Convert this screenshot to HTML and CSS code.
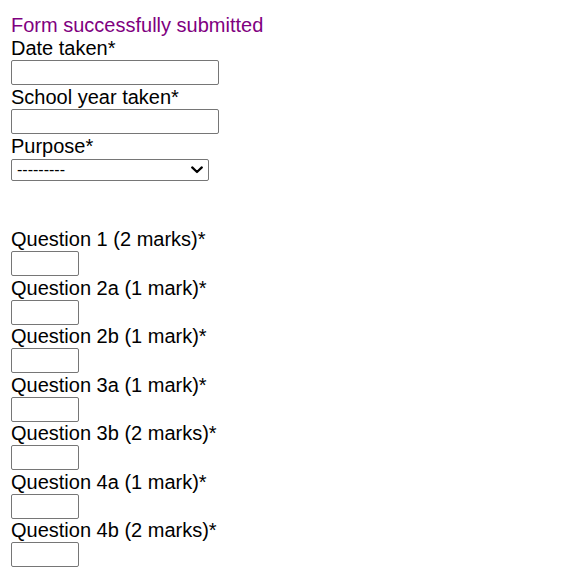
FILE: index.html
```html
<!DOCTYPE html>
<html lang="en">
<head>
<meta charset="utf-8">
<title>Form</title>
<link rel="stylesheet" href="styles.css">
</head>
<body>
<form class="form">
  <div class="message">Form successfully submitted</div>
  <div class="field">
    <label class="label" for="date">Date taken*</label>
    <input class="input input-wide" id="date" type="text">
  </div>
  <div class="field">
    <label class="label" for="year">School year taken*</label>
    <input class="input input-wide" id="year" type="text">
  </div>
  <div class="field">
    <label class="label" for="purpose">Purpose*</label>
    <div class="select-wrap">
      <select class="select" id="purpose">
        <option>---------</option>
      </select>
      <svg class="chevron" width="12" height="8" viewBox="0 0 12 8" aria-hidden="true">
        <path d="M1.2 1.4 L6 6 L10.8 1.4" fill="none" stroke="#000" stroke-width="2.2" stroke-linecap="round" stroke-linejoin="round"/>
      </svg>
    </div>
  </div>
  <div class="questions">
    <div class="qfield">
      <label class="label" for="q1">Question 1 (2 marks)*</label>
      <input class="input input-small" id="q1" type="text">
    </div>
    <div class="qfield">
      <label class="label" for="q2a">Question 2a (1 mark)*</label>
      <input class="input input-small" id="q2a" type="text">
    </div>
    <div class="qfield">
      <label class="label" for="q2b">Question 2b (1 mark)*</label>
      <input class="input input-small" id="q2b" type="text">
    </div>
    <div class="qfield">
      <label class="label" for="q3a">Question 3a (1 mark)*</label>
      <input class="input input-small" id="q3a" type="text">
    </div>
    <div class="qfield">
      <label class="label" for="q3b">Question 3b (2 marks)*</label>
      <input class="input input-small" id="q3b" type="text">
    </div>
    <div class="qfield">
      <label class="label" for="q4a">Question 4a (1 mark)*</label>
      <input class="input input-small" id="q4a" type="text">
    </div>
    <div class="qfield">
      <label class="label" for="q4b">Question 4b (2 marks)*</label>
      <input class="input input-small" id="q4b" type="text">
    </div>
  </div>
</form>
</body>
</html>
```

FILE: styles.css
```css
html, body {
  margin: 0;
  padding: 0;
  background: #ffffff;
}

body {
  padding: 14px 11px 0 11px;
  font-family: "Liberation Sans", Arial, sans-serif;
  font-size: 20px;
  color: #000000;
  overflow: hidden;
}

.form {
  display: flex;
  flex-direction: column;
}

.message {
  color: #800080;
  line-height: 22px;
  padding-bottom: 2px;
}

.field {
  display: flex;
  flex-direction: column;
  align-items: flex-start;
  margin-bottom: 2px;
}

.label {
  display: block;
  line-height: 20px;
  padding-bottom: 2px;
}

.input {
  box-sizing: border-box;
  height: 25px;
  margin: 0;
  padding: 1px 3px;
  border: 1px solid #767676;
  border-radius: 2px;
  background: #ffffff;
  font-family: "Liberation Sans", Arial, sans-serif;
  font-size: 16px;
}

.input-wide {
  width: 208px;
}

.input-small {
  width: 68px;
}

.select-wrap {
  position: relative;
  margin-top: 1px;
  width: 198px;
  height: 22px;
}

.select {
  display: block;
  -webkit-appearance: none;
  appearance: none;
  box-sizing: border-box;
  width: 198px;
  height: 22px;
  margin: 0;
  padding: 0 0 0 5px;
  border: 1px solid #767676;
  border-radius: 2px;
  background: #ffffff;
  color: #000000;
  font-family: "Liberation Sans", Arial, sans-serif;
  font-size: 16px;
  line-height: 20px;
}

.chevron {
  display: block;
  position: absolute;
  left: 180px;
  top: 7px;
  pointer-events: none;
}

.questions {
  display: flex;
  flex-direction: column;
  margin-top: 46px;
}

.qfield {
  display: flex;
  flex-direction: column;
  align-items: flex-start;
  margin-bottom: 1.5px;
}
```
